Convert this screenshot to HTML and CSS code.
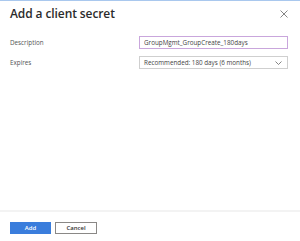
FILE: index.html
```html
<!DOCTYPE html>
<html>

<head>
    <meta http-equiv="Content-Type" content="text/html;charset=utf-8">
    <title>Add a client secret</title>
    <link rel="stylesheet" href="styles.css">
</head>

<body>
    <div class="panel">
        <div class="panel-header">
            <h2 class="panel-title">Add a client secret</h2>
            <button class="close-btn" aria-label="Close">
                <svg width="8" height="8" viewBox="0 0 8 8">
                    <path d="M0.5 0.5 L7.5 7.5 M7.5 0.5 L0.5 7.5" stroke="#777" stroke-width="0.9" fill="none"/>
                </svg>
            </button>
        </div>

        <div class="form">
            <div class="form-row">
                <label class="form-label" for="desc">Description</label>
                <input class="text-input" id="desc" type="text" value="GroupMgmt_GroupCreate_180days">
            </div>
            <div class="form-row">
                <label class="form-label">Expires</label>
                <div class="dropdown">
                    <span>Recommended: 180 days (6 months)</span>
                    <svg width="7" height="4" viewBox="0 0 7 4">
                        <path d="M0.5 0.5 L3.5 3.5 L6.5 0.5" stroke="#666" stroke-width="0.8" fill="none"/>
                    </svg>
                </div>
            </div>
        </div>

        <div class="panel-footer">
            <button class="btn btn-primary">Add</button>
            <button class="btn btn-default">Cancel</button>
        </div>
    </div>
</body>

</html>
```

FILE: styles.css
```css
html,
body {
    margin: 0;
    height: 100%;
    background: #fff;
}

body {
    font-family: "Open Sans", "Noto Sans", sans-serif;
    color: #323130;
}

.panel {
    height: 100%;
    box-sizing: border-box;
    border-top: 1px solid #a9c8ee;
    display: flex;
    flex-direction: column;
}

.panel-header {
    display: flex;
    align-items: center;
    justify-content: space-between;
    padding: 3px 12px 0 10px;
}

.panel-title {
    margin: 0;
    font-size: 12px;
    font-weight: 600;
    line-height: 20px;
    letter-spacing: -0.1px;
    color: #2b2b2b;
}

.close-btn {
    border: none;
    background: none;
    padding: 0;
    width: 8px;
    height: 8px;
    display: flex;
}

.form {
    margin-top: 12px;
    display: flex;
    flex-direction: column;
    gap: 7px;
}

.form-row {
    display: flex;
    align-items: center;
    padding: 0 12px 0 10px;
}

.form-label {
    width: 129px;
    font-size: 6.3px;
    color: #555;
}

.text-input,
.dropdown {
    flex: 1;
    box-sizing: border-box;
    height: 13px;
    font-family: inherit;
    font-size: 6.3px;
    color: #444;
    padding: 0 4px;
    margin: 0;
    background: #fff;
}

.text-input {
    border: 1px solid #c9a6dc;
    outline: none;
}

.dropdown {
    border: 1px solid #cfcfcf;
    display: flex;
    align-items: center;
    justify-content: space-between;
    padding-right: 5px;
}

.panel-footer {
    margin-top: auto;
    box-sizing: border-box;
    border-top: 2px solid #f3f3f3;
    height: 31px;
    display: flex;
    align-items: flex-start;
    gap: 4px;
    padding: 10px 10px 0;
}

.btn {
    box-sizing: border-box;
    height: 12px;
    width: 42px;
    font-family: inherit;
    font-size: 6px;
    font-weight: 600;
    padding: 0;
    line-height: 10px;
}

.btn-primary {
    width: 41px;
    background: #3a7ddc;
    border: 1px solid #3a7ddc;
    color: #fff;
}

.btn-default {
    background: #fff;
    border: 1px solid #8a8886;
    color: #323130;
}
```
